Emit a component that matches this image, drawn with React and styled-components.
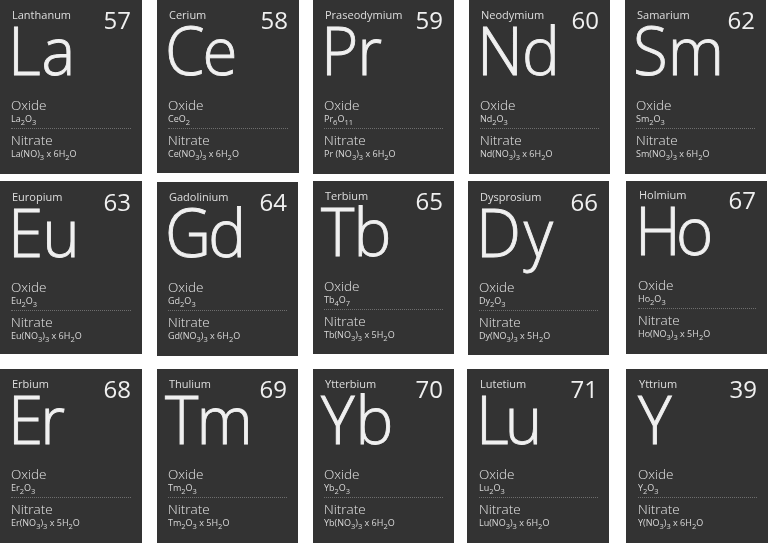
import React from 'react';
import styled, { createGlobalStyle } from 'styled-components';

const Global = createGlobalStyle`
  html, body { margin: 0; padding: 0; background: #fff; }
  body { width: 768px; height: 543px; overflow: hidden; font-family: "Open Sans", "Noto Sans", sans-serif; }
`;
const Page = styled.div`
  display: flex; flex-direction: column; width: 768px; height: 543px;
`;
const Row = styled.div`
  display: flex; align-items: flex-start; height: ${p => p.$h}px; margin-top: ${p => p.$top}px;
`;
const Card = styled.div`
  box-sizing: border-box; flex: none;
  width: ${p => p.$w}px; height: ${p => p.$h}px;
  margin-left: ${p => p.$left}px; margin-top: ${p => p.$top}px;
  padding: ${p => p.$shift}px 11px 0 ${p => p.$pad}px;
  background: #333333; color: #f2f2f2;
  display: flex; flex-direction: column;
`;
const Head = styled.div`
  display: flex; justify-content: space-between; align-items: flex-start; height: 14px;
`;
const Name = styled.div`
  font-size: 11px; line-height: 14px; margin: 7px 0 0 1px; color: #dedede; filter: blur(0.25px);
`;
const Num = styled.div`
  font-size: 24px; line-height: 30px; margin-top: 4px; color: #f0f0f0; filter: blur(0.2px);
`;
const Symbol = styled.div`
  font-weight: 300; font-size: 67px; line-height: 68px; height: 77px; color: #f0f0f0;
  margin-left: ${p => p.$indent}px; letter-spacing: ${p => p.$track}px; white-space: nowrap;
  transform: scaleX(0.95); transform-origin: left center;
  -webkit-text-stroke: 0.9px #f0f0f0; filter: blur(0.35px);
`;
const Label = styled.div`
  font-size: 13.5px; font-weight: 300; line-height: 16px; color: #e4e4e4; filter: blur(0.2px);
`;
const Formula = styled.div`
  font-size: 9px; line-height: 12px; color: #d8d8d8; white-space: nowrap; filter: blur(0.25px);
  sub { font-size: 7.5px; line-height: 0; vertical-align: -3px; }
`;
const Oxide = styled.div`
  margin-top: 5px; padding-bottom: 3px; margin-bottom: 3px; border-bottom: 1px dotted #6e6e6e;
`;

const s = t => t.split(/(_\d+)/).map((x, i) => x[0] === '_' ? <sub key={i}>{x.slice(1)}</sub> : x);

const el = (name, num, sym, oxide, nitrate, left, w, pad, track, shift, h = 174, top = 0, indent = -3) =>
  ({ name, num, sym, oxide, nitrate, left, w, pad, track, shift, h, top, indent });

const rows = [
  { top: 0, h: 174, cards: [
    el('Lanthanum','57','La','La_2O_3','La(NO)_3 x 6H_2O',0,142,11,1,1),
    el('Cerium','58','Ce','CeO_2','Ce(NO_3)_3 x 6H_2O',15,142,11,-2,1,173),
    el('Praseodymium','59','Pr','Pr_6O_11','Pr (NO_3)_3 x 6H_2O',14,141,11,-1,1),
    el('Neodymium','60','Nd','Nd_2O_3','Nd(NO_3)_3 x 6H_2O',15,141,11,-1,1),
    el('Samarium','62','Sm','Sm_2O_3','Sm(NO_3)_3 x 6H_2O',15,141,11,0,1),
  ]},
  { top: 7, h: 175, cards: [
    el('Europium','63','Eu','Eu_2O_3','Eu(NO_3)_3 x 6H_2O',0,142,11,-1,2,173),
    el('Gadolinium','64','Gd','Gd_2O_3','Gd(NO_3)_3 x 6H_2O',15,141,11,-3,1,174,1),
    el('Terbium','65','Tb','Tb_4O_7','Tb(NO_3)_3 x 5H_2O',15,141,11,-1,1,173),
    el('Dysprosium','66','Dy','Dy_2O_3','Dy(NO_3)_3 x 5H_2O',14,141,11,3,2),
    el('Holmium','67','Ho','Ho_2O_3','Ho(NO_3)_3 x 5H_2O',17,141,12,-5,0,173),
  ]},
  { top: 13, h: 174, cards: [
    el('Erbium','68','Er','Er_2O_3','Er(NO_3)_3 x 5H_2O',0,142,11,-3,1),
    el('Thulium','69','Tm','Tm_2O_3','Tm_2O_3 x 5H_2O',15,141,11,-2,1),
    el('Ytterbium','70','Yb','Yb_2O_3','Yb(NO_3)_3 x 6H_2O',15,141,11,1,1),
    el('Lutetium','71','Lu','Lu_2O_3','Lu(NO_3)_3 x 6H_2O',13,142,12,-4,1),
    el('Yttrium','39','Y','Y_2O_3','Y(NO_3)_3 x 6H_2O',17,142,12,0,1,174,0,0),
  ]},
];

export default function App() {
  return (
    <Page>
      <Global />
      {rows.map((r, i) => (
        <Row key={i} $top={r.top} $h={r.h}>
          {r.cards.map(c => (
            <Card key={c.sym} $left={c.left} $w={c.w} $pad={c.pad} $h={c.h} $top={c.top} $shift={c.shift}>
              <Head><Name>{c.name}</Name><Num>{c.num}</Num></Head>
              <Symbol $track={c.track} $indent={c.indent}>{c.sym}</Symbol>
              <Oxide><Label>Oxide</Label><Formula>{s(c.oxide)}</Formula></Oxide>
              <Label>Nitrate</Label>
              <Formula>{s(c.nitrate)}</Formula>
            </Card>
          ))}
        </Row>
      ))}
    </Page>
  );
}
